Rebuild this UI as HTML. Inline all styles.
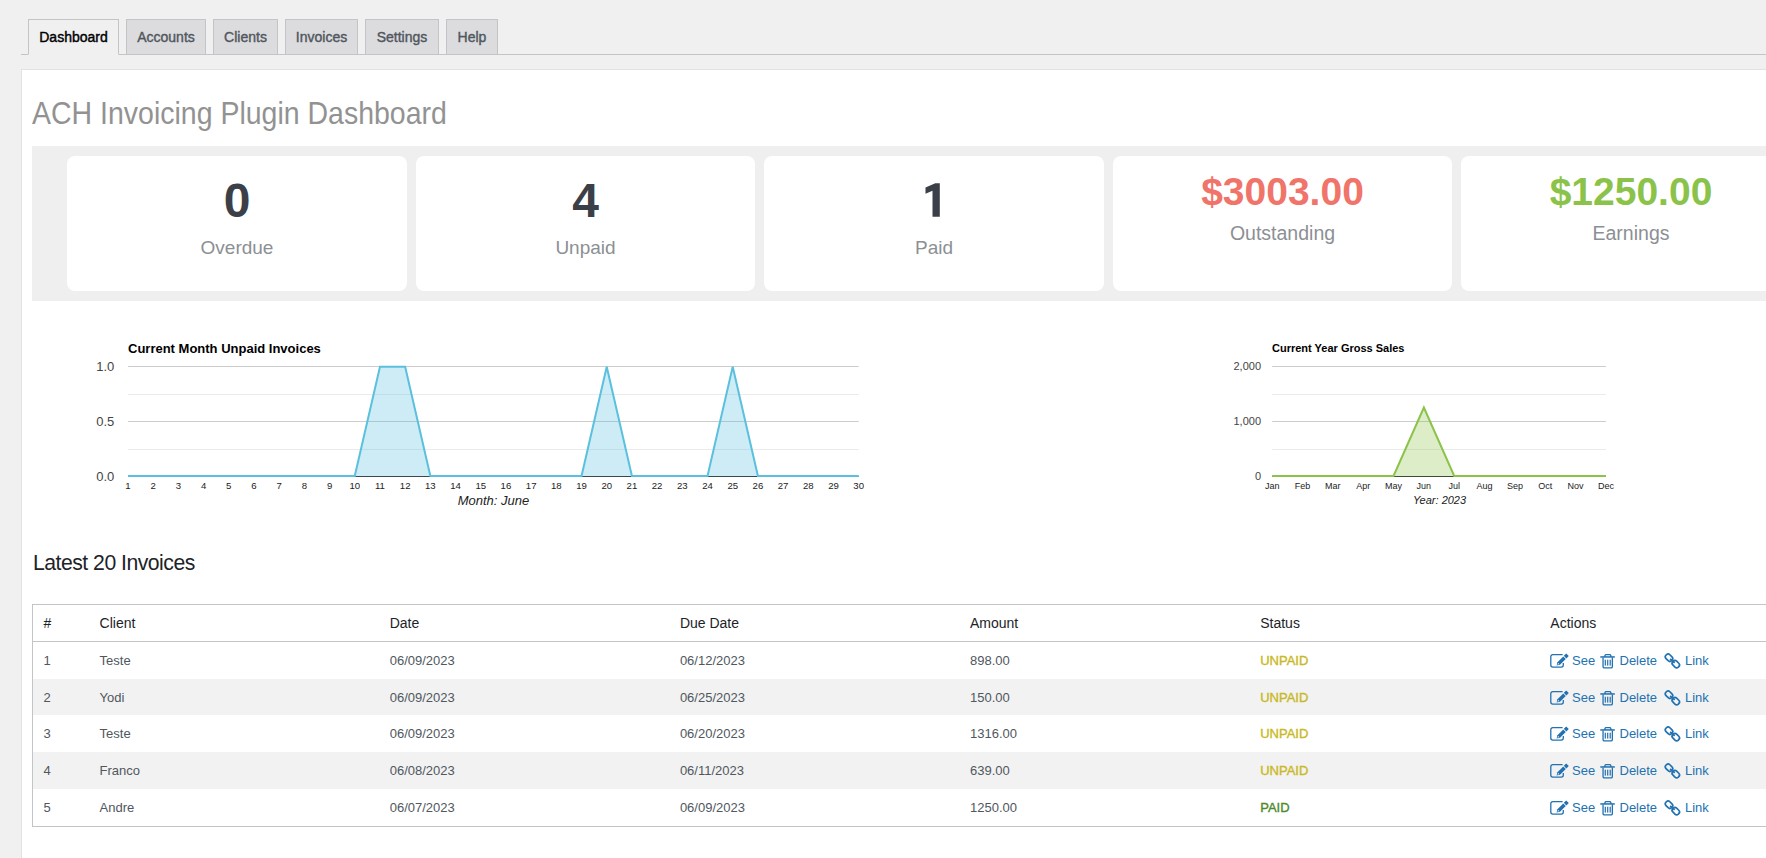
<!DOCTYPE html>
<html><head><meta charset="utf-8">
<style>
*{box-sizing:border-box;margin:0;padding:0}
html,body{width:1766px;height:858px;overflow:hidden;background:#f0f0f1;font-family:"Liberation Sans",sans-serif;position:relative}
.abs{position:absolute}
.navline{position:absolute;left:21px;top:54px;width:1745px;height:1px;background:#c3c4c7}
.tab{position:absolute;top:19px;height:36px;border:1px solid #c3c4c7;background:#dcdcde;color:#50575e;font-weight:normal;-webkit-text-stroke:0.4px currentColor;font-size:14px;line-height:34px;text-align:center;white-space:nowrap}
.tab.active{background:#f0f0f1;border-bottom-color:#f0f0f1;color:#000}
.panel{position:absolute;left:21px;top:69px;width:1800px;height:900px;background:#fff;border:1px solid #e2e2e2}
.title{position:absolute;left:32px;top:94.8px;font-size:30.5px;color:#929292;white-space:nowrap;line-height:36px;transform:scaleX(0.934);transform-origin:0 0}
.stats{position:absolute;left:32px;top:146px;width:1800px;height:155px;background:#efefef}
.card{position:absolute;top:156px;height:135px;background:#fff;border-radius:8px;text-align:center}
.num{position:absolute;left:0;right:0;font-weight:bold;color:#3b4048;white-space:nowrap}
.t{position:absolute;white-space:nowrap;line-height:1}
.ic{position:absolute}
.h2{position:absolute;left:33px;white-space:nowrap;color:#1d2327;line-height:1}
.lbl{position:absolute;left:0;right:0;color:#8c8f94;white-space:nowrap}
</style></head>
<body>
<div class="navline"></div>
<div class="tab active" style="left:28px;width:91px">Dashboard</div>
<div class="tab" style="left:126px;width:80px">Accounts</div>
<div class="tab" style="left:213px;width:65px">Clients</div>
<div class="tab" style="left:285px;width:73px">Invoices</div>
<div class="tab" style="left:365px;width:74px">Settings</div>
<div class="tab" style="left:446px;width:52px">Help</div>

<div class="panel"></div>
<div class="title">ACH Invoicing Plugin Dashboard</div>

<div class="stats"></div>
<div class="card" style="left:67px;width:340px"><div class="num" style="top:17px;font-size:48px;line-height:56px">0</div><div class="lbl" style="top:80px;font-size:19px;line-height:24px">Overdue</div></div>
<div class="card" style="left:416px;width:339px"><div class="num" style="top:17px;font-size:48px;line-height:56px">4</div><div class="lbl" style="top:80px;font-size:19px;line-height:24px">Unpaid</div></div>
<div class="card" style="left:764px;width:340px"><svg class="abs" style="left:0;top:0" width="340" height="80"><polygon points="171.3,27.2 175.8,27.2 175.8,60.7 168.5,60.7 168.5,34.7 161.5,37.7 161.5,31.5" fill="#3b4048"/></svg><div class="lbl" style="top:80px;font-size:19px;line-height:24px">Paid</div></div>
<div class="card" style="left:1113px;width:339px"><div class="num" style="top:14px;font-size:39px;line-height:44px;color:#f0746a">$3003.00</div><div class="lbl" style="top:64.6px;font-size:19.5px;line-height:24px">Outstanding</div></div>
<div class="card" style="left:1461px;width:340px"><div class="num" style="top:14px;font-size:39px;line-height:44px;color:#8bc34a">$1250.00</div><div class="lbl" style="top:64.6px;font-size:19.5px;line-height:24px">Earnings</div></div>

<svg class="abs" style="left:0;top:0" width="1766" height="560" font-family="Liberation Sans, sans-serif">
<text x="128" y="353" font-size="13" font-weight="bold" fill="#000">Current Month Unpaid Invoices</text>
<rect x="128" y="366" width="730.7" height="1" fill="#cccccc"/>
<rect x="128" y="394" width="730.7" height="1" fill="#ebebeb"/>
<rect x="128" y="421" width="730.7" height="1" fill="#cccccc"/>
<rect x="128" y="449" width="730.7" height="1" fill="#ebebeb"/>
<rect x="128" y="476" width="730.7" height="1" fill="#333333"/>
<path d="M128.00,476.50 L128.00,476.00 L153.20,476.00 L178.39,476.00 L203.59,476.00 L228.79,476.00 L253.98,476.00 L279.18,476.00 L304.38,476.00 L329.57,476.00 L354.77,476.00 L379.97,366.80 L405.16,366.80 L430.36,476.00 L455.56,476.00 L480.75,476.00 L505.95,476.00 L531.14,476.00 L556.34,476.00 L581.54,476.00 L606.73,366.80 L631.93,476.00 L657.13,476.00 L682.32,476.00 L707.52,476.00 L732.72,366.80 L757.91,476.00 L783.11,476.00 L808.31,476.00 L833.50,476.00 L858.70,476.00 L858.70,476.50 Z" fill="#5bc0de" fill-opacity="0.3" stroke="none"/>
<path d="M128.00,476.00 L153.20,476.00 L178.39,476.00 L203.59,476.00 L228.79,476.00 L253.98,476.00 L279.18,476.00 L304.38,476.00 L329.57,476.00 L354.77,476.00 L379.97,366.80 L405.16,366.80 L430.36,476.00 L455.56,476.00 L480.75,476.00 L505.95,476.00 L531.14,476.00 L556.34,476.00 L581.54,476.00 L606.73,366.80 L631.93,476.00 L657.13,476.00 L682.32,476.00 L707.52,476.00 L732.72,366.80 L757.91,476.00 L783.11,476.00 L808.31,476.00 L833.50,476.00 L858.70,476.00" fill="none" stroke="#5bc0de" stroke-width="2" stroke-linejoin="miter"/>
<text x="114.3" y="370.8" font-size="13" text-anchor="end" fill="#444444">1.0</text>
<text x="114.3" y="425.8" font-size="13" text-anchor="end" fill="#444444">0.5</text>
<text x="114.3" y="480.8" font-size="13" text-anchor="end" fill="#444444">0.0</text>
<text x="128.00" y="489" font-size="9.6" text-anchor="middle" fill="#222222">1</text>
<text x="153.20" y="489" font-size="9.6" text-anchor="middle" fill="#222222">2</text>
<text x="178.39" y="489" font-size="9.6" text-anchor="middle" fill="#222222">3</text>
<text x="203.59" y="489" font-size="9.6" text-anchor="middle" fill="#222222">4</text>
<text x="228.79" y="489" font-size="9.6" text-anchor="middle" fill="#222222">5</text>
<text x="253.98" y="489" font-size="9.6" text-anchor="middle" fill="#222222">6</text>
<text x="279.18" y="489" font-size="9.6" text-anchor="middle" fill="#222222">7</text>
<text x="304.38" y="489" font-size="9.6" text-anchor="middle" fill="#222222">8</text>
<text x="329.57" y="489" font-size="9.6" text-anchor="middle" fill="#222222">9</text>
<text x="354.77" y="489" font-size="9.6" text-anchor="middle" fill="#222222">10</text>
<text x="379.97" y="489" font-size="9.6" text-anchor="middle" fill="#222222">11</text>
<text x="405.16" y="489" font-size="9.6" text-anchor="middle" fill="#222222">12</text>
<text x="430.36" y="489" font-size="9.6" text-anchor="middle" fill="#222222">13</text>
<text x="455.56" y="489" font-size="9.6" text-anchor="middle" fill="#222222">14</text>
<text x="480.75" y="489" font-size="9.6" text-anchor="middle" fill="#222222">15</text>
<text x="505.95" y="489" font-size="9.6" text-anchor="middle" fill="#222222">16</text>
<text x="531.14" y="489" font-size="9.6" text-anchor="middle" fill="#222222">17</text>
<text x="556.34" y="489" font-size="9.6" text-anchor="middle" fill="#222222">18</text>
<text x="581.54" y="489" font-size="9.6" text-anchor="middle" fill="#222222">19</text>
<text x="606.73" y="489" font-size="9.6" text-anchor="middle" fill="#222222">20</text>
<text x="631.93" y="489" font-size="9.6" text-anchor="middle" fill="#222222">21</text>
<text x="657.13" y="489" font-size="9.6" text-anchor="middle" fill="#222222">22</text>
<text x="682.32" y="489" font-size="9.6" text-anchor="middle" fill="#222222">23</text>
<text x="707.52" y="489" font-size="9.6" text-anchor="middle" fill="#222222">24</text>
<text x="732.72" y="489" font-size="9.6" text-anchor="middle" fill="#222222">25</text>
<text x="757.91" y="489" font-size="9.6" text-anchor="middle" fill="#222222">26</text>
<text x="783.11" y="489" font-size="9.6" text-anchor="middle" fill="#222222">27</text>
<text x="808.31" y="489" font-size="9.6" text-anchor="middle" fill="#222222">28</text>
<text x="833.50" y="489" font-size="9.6" text-anchor="middle" fill="#222222">29</text>
<text x="858.70" y="489" font-size="9.6" text-anchor="middle" fill="#222222">30</text>
<text x="493.4" y="505" font-size="13" font-style="italic" text-anchor="middle" fill="#222222">Month: June</text>
<text x="1272" y="352" font-size="11" font-weight="bold" fill="#000">Current Year Gross Sales</text>
<rect x="1272.2" y="366" width="333.7" height="1" fill="#cccccc"/>
<rect x="1272.2" y="394" width="333.7" height="1" fill="#ebebeb"/>
<rect x="1272.2" y="421" width="333.7" height="1" fill="#cccccc"/>
<rect x="1272.2" y="449" width="333.7" height="1" fill="#ebebeb"/>
<rect x="1272.2" y="476" width="333.7" height="1" fill="#333333"/>
<path d="M1272.20,476.50 L1272.20,476.00 L1302.54,476.00 L1332.87,476.00 L1363.21,476.00 L1393.55,476.00 L1423.88,407.56 L1454.22,476.00 L1484.55,476.00 L1514.89,476.00 L1545.23,476.00 L1575.56,476.00 L1605.90,476.00 L1605.90,476.50 Z" fill="#8bc34a" fill-opacity="0.3" stroke="none"/>
<path d="M1272.20,476.00 L1302.54,476.00 L1332.87,476.00 L1363.21,476.00 L1393.55,476.00 L1423.88,407.56 L1454.22,476.00 L1484.55,476.00 L1514.89,476.00 L1545.23,476.00 L1575.56,476.00 L1605.90,476.00" fill="none" stroke="#8bc34a" stroke-width="2"/>
<text x="1261" y="370" font-size="11" text-anchor="end" fill="#444444">2,000</text>
<text x="1261" y="425" font-size="11" text-anchor="end" fill="#444444">1,000</text>
<text x="1261" y="480" font-size="11" text-anchor="end" fill="#444444">0</text>
<text x="1272.20" y="489" font-size="9" text-anchor="middle" fill="#222222">Jan</text>
<text x="1302.54" y="489" font-size="9" text-anchor="middle" fill="#222222">Feb</text>
<text x="1332.87" y="489" font-size="9" text-anchor="middle" fill="#222222">Mar</text>
<text x="1363.21" y="489" font-size="9" text-anchor="middle" fill="#222222">Apr</text>
<text x="1393.55" y="489" font-size="9" text-anchor="middle" fill="#222222">May</text>
<text x="1423.88" y="489" font-size="9" text-anchor="middle" fill="#222222">Jun</text>
<text x="1454.22" y="489" font-size="9" text-anchor="middle" fill="#222222">Jul</text>
<text x="1484.55" y="489" font-size="9" text-anchor="middle" fill="#222222">Aug</text>
<text x="1514.89" y="489" font-size="9" text-anchor="middle" fill="#222222">Sep</text>
<text x="1545.23" y="489" font-size="9" text-anchor="middle" fill="#222222">Oct</text>
<text x="1575.56" y="489" font-size="9" text-anchor="middle" fill="#222222">Nov</text>
<text x="1605.90" y="489" font-size="9" text-anchor="middle" fill="#222222">Dec</text>
<text x="1439.5" y="504" font-size="11" font-style="italic" text-anchor="middle" fill="#222222">Year: 2023</text>
</svg>
<div class="h2" style="top:551.9px;font-size:21.2px;letter-spacing:-0.5px">Latest 20 Invoices</div>
<div class="abs" style="left:32px;top:604px;width:1800px;height:223px;border:1px solid #c3c4c7;background:#fff"></div>
<div class="abs" style="left:33px;top:641px;width:1800px;height:1px;background:#c3c4c7"></div>
<div class="abs" style="left:33px;top:679px;width:1800px;height:36px;background:#f2f2f2"></div>
<div class="abs" style="left:33px;top:752px;width:1800px;height:37px;background:#f2f2f2"></div>
<div class="t" style="left:43.6px;top:616.15px;font-size:14px;color:#1d2327;font-weight:normal;">#</div>
<div class="t" style="left:99.6px;top:616.15px;font-size:14px;color:#1d2327;font-weight:normal;">Client</div>
<div class="t" style="left:389.7px;top:616.15px;font-size:14px;color:#1d2327;font-weight:normal;">Date</div>
<div class="t" style="left:679.9px;top:616.15px;font-size:14px;color:#1d2327;font-weight:normal;">Due Date</div>
<div class="t" style="left:970.0px;top:616.15px;font-size:14px;color:#1d2327;font-weight:normal;">Amount</div>
<div class="t" style="left:1260.2px;top:616.15px;font-size:14px;color:#1d2327;font-weight:normal;">Status</div>
<div class="t" style="left:1550.3px;top:616.15px;font-size:14px;color:#1d2327;font-weight:normal;">Actions</div>
<div class="t" style="left:43.6px;top:654.00px;font-size:13px;color:#50575e;font-weight:normal;">1</div>
<div class="t" style="left:99.6px;top:654.00px;font-size:13px;color:#50575e;font-weight:normal;">Teste</div>
<div class="t" style="left:389.7px;top:654.00px;font-size:13px;color:#50575e;font-weight:normal;">06/09/2023</div>
<div class="t" style="left:679.9px;top:654.00px;font-size:13px;color:#50575e;font-weight:normal;">06/12/2023</div>
<div class="t" style="left:970.0px;top:654.00px;font-size:13px;color:#50575e;font-weight:normal;">898.00</div>
<div class="t" style="left:1260.2px;top:654.00px;font-size:13px;color:#c9b824;font-weight:normal;-webkit-text-stroke:0.35px currentColor;">UNPAID</div>
<svg class="ic" style="left:1548.5px;top:652.7px" width="20" height="17" viewBox="0 0 20 17"><path d="M13.6,1.7 H3.8 A2,2 0 0 0 1.8,3.7 V12.1 A2,2 0 0 0 3.8,14.1 H12.3 A2,2 0 0 0 14.3,12.1 V10" fill="none" stroke="#2271b1" stroke-width="1.3"/><g transform="translate(7.6,12.6) rotate(-45)"><path d="M0,0 L3,-1.8 H11.2 V1.8 H3 Z" fill="#2271b1"/><rect x="12" y="-1.8" width="3.4" height="3.6" fill="#2271b1"/><path d="M1.2,0 L3,-0.8 V0.8 Z" fill="#fff"/></g></svg>
<div class="t" style="left:1572px;top:654.00px;font-size:13px;color:#2271b1;font-weight:normal;">See</div>
<svg class="ic" style="left:1599px;top:653px" width="18" height="17" viewBox="0 0 18 17"><rect x="1.3" y="3.2" width="14.5" height="1.5" fill="#2271b1"/><path d="M5.9,3.9 V2.6 A1.3,1.3 0 0 1 7.2,1.7 H10.6 A1.3,1.3 0 0 1 11.9,2.6 V3.9" fill="none" stroke="#2271b1" stroke-width="1.3"/><path d="M4.05,4.4 V13.6 A1.3,1.3 0 0 0 5.35,14.85 H12.05 A1.3,1.3 0 0 0 13.35,13.6 V4.4" fill="none" stroke="#2271b1" stroke-width="1.3"/><rect x="5.7" y="6.7" width="1.2" height="5.9" fill="#2271b1"/><rect x="8.1" y="6.7" width="1.2" height="5.9" fill="#2271b1"/><rect x="10.6" y="6.7" width="1.2" height="5.9" fill="#2271b1"/></svg>
<div class="t" style="left:1619.5px;top:654.00px;font-size:13px;color:#2271b1;font-weight:normal;">Delete</div>
<svg class="ic" style="left:1663px;top:652px" width="19" height="18" viewBox="0 0 19 18"><g fill="none" stroke="#2271b1" stroke-width="1.7"><g transform="translate(6.0,5.7) rotate(45)"><rect x="-3.9" y="-2.7" width="7.8" height="5.4" rx="2.4"/><path d="M4.6,0 H1.6"/></g><g transform="translate(12.8,12.1) rotate(45)"><rect x="-3.9" y="-2.7" width="7.8" height="5.4" rx="2.4"/><path d="M-4.6,0 H-1.6"/></g></g></svg>
<div class="t" style="left:1685px;top:654.00px;font-size:13px;color:#2271b1;font-weight:normal;">Link</div>
<div class="t" style="left:43.6px;top:691.00px;font-size:13px;color:#50575e;font-weight:normal;">2</div>
<div class="t" style="left:99.6px;top:691.00px;font-size:13px;color:#50575e;font-weight:normal;">Yodi</div>
<div class="t" style="left:389.7px;top:691.00px;font-size:13px;color:#50575e;font-weight:normal;">06/09/2023</div>
<div class="t" style="left:679.9px;top:691.00px;font-size:13px;color:#50575e;font-weight:normal;">06/25/2023</div>
<div class="t" style="left:970.0px;top:691.00px;font-size:13px;color:#50575e;font-weight:normal;">150.00</div>
<div class="t" style="left:1260.2px;top:691.00px;font-size:13px;color:#c9b824;font-weight:normal;-webkit-text-stroke:0.35px currentColor;">UNPAID</div>
<svg class="ic" style="left:1548.5px;top:689.7px" width="20" height="17" viewBox="0 0 20 17"><path d="M13.6,1.7 H3.8 A2,2 0 0 0 1.8,3.7 V12.1 A2,2 0 0 0 3.8,14.1 H12.3 A2,2 0 0 0 14.3,12.1 V10" fill="none" stroke="#2271b1" stroke-width="1.3"/><g transform="translate(7.6,12.6) rotate(-45)"><path d="M0,0 L3,-1.8 H11.2 V1.8 H3 Z" fill="#2271b1"/><rect x="12" y="-1.8" width="3.4" height="3.6" fill="#2271b1"/><path d="M1.2,0 L3,-0.8 V0.8 Z" fill="#fff"/></g></svg>
<div class="t" style="left:1572px;top:691.00px;font-size:13px;color:#2271b1;font-weight:normal;">See</div>
<svg class="ic" style="left:1599px;top:690px" width="18" height="17" viewBox="0 0 18 17"><rect x="1.3" y="3.2" width="14.5" height="1.5" fill="#2271b1"/><path d="M5.9,3.9 V2.6 A1.3,1.3 0 0 1 7.2,1.7 H10.6 A1.3,1.3 0 0 1 11.9,2.6 V3.9" fill="none" stroke="#2271b1" stroke-width="1.3"/><path d="M4.05,4.4 V13.6 A1.3,1.3 0 0 0 5.35,14.85 H12.05 A1.3,1.3 0 0 0 13.35,13.6 V4.4" fill="none" stroke="#2271b1" stroke-width="1.3"/><rect x="5.7" y="6.7" width="1.2" height="5.9" fill="#2271b1"/><rect x="8.1" y="6.7" width="1.2" height="5.9" fill="#2271b1"/><rect x="10.6" y="6.7" width="1.2" height="5.9" fill="#2271b1"/></svg>
<div class="t" style="left:1619.5px;top:691.00px;font-size:13px;color:#2271b1;font-weight:normal;">Delete</div>
<svg class="ic" style="left:1663px;top:689px" width="19" height="18" viewBox="0 0 19 18"><g fill="none" stroke="#2271b1" stroke-width="1.7"><g transform="translate(6.0,5.7) rotate(45)"><rect x="-3.9" y="-2.7" width="7.8" height="5.4" rx="2.4"/><path d="M4.6,0 H1.6"/></g><g transform="translate(12.8,12.1) rotate(45)"><rect x="-3.9" y="-2.7" width="7.8" height="5.4" rx="2.4"/><path d="M-4.6,0 H-1.6"/></g></g></svg>
<div class="t" style="left:1685px;top:691.00px;font-size:13px;color:#2271b1;font-weight:normal;">Link</div>
<div class="t" style="left:43.6px;top:727.00px;font-size:13px;color:#50575e;font-weight:normal;">3</div>
<div class="t" style="left:99.6px;top:727.00px;font-size:13px;color:#50575e;font-weight:normal;">Teste</div>
<div class="t" style="left:389.7px;top:727.00px;font-size:13px;color:#50575e;font-weight:normal;">06/09/2023</div>
<div class="t" style="left:679.9px;top:727.00px;font-size:13px;color:#50575e;font-weight:normal;">06/20/2023</div>
<div class="t" style="left:970.0px;top:727.00px;font-size:13px;color:#50575e;font-weight:normal;">1316.00</div>
<div class="t" style="left:1260.2px;top:727.00px;font-size:13px;color:#c9b824;font-weight:normal;-webkit-text-stroke:0.35px currentColor;">UNPAID</div>
<svg class="ic" style="left:1548.5px;top:725.7px" width="20" height="17" viewBox="0 0 20 17"><path d="M13.6,1.7 H3.8 A2,2 0 0 0 1.8,3.7 V12.1 A2,2 0 0 0 3.8,14.1 H12.3 A2,2 0 0 0 14.3,12.1 V10" fill="none" stroke="#2271b1" stroke-width="1.3"/><g transform="translate(7.6,12.6) rotate(-45)"><path d="M0,0 L3,-1.8 H11.2 V1.8 H3 Z" fill="#2271b1"/><rect x="12" y="-1.8" width="3.4" height="3.6" fill="#2271b1"/><path d="M1.2,0 L3,-0.8 V0.8 Z" fill="#fff"/></g></svg>
<div class="t" style="left:1572px;top:727.00px;font-size:13px;color:#2271b1;font-weight:normal;">See</div>
<svg class="ic" style="left:1599px;top:726px" width="18" height="17" viewBox="0 0 18 17"><rect x="1.3" y="3.2" width="14.5" height="1.5" fill="#2271b1"/><path d="M5.9,3.9 V2.6 A1.3,1.3 0 0 1 7.2,1.7 H10.6 A1.3,1.3 0 0 1 11.9,2.6 V3.9" fill="none" stroke="#2271b1" stroke-width="1.3"/><path d="M4.05,4.4 V13.6 A1.3,1.3 0 0 0 5.35,14.85 H12.05 A1.3,1.3 0 0 0 13.35,13.6 V4.4" fill="none" stroke="#2271b1" stroke-width="1.3"/><rect x="5.7" y="6.7" width="1.2" height="5.9" fill="#2271b1"/><rect x="8.1" y="6.7" width="1.2" height="5.9" fill="#2271b1"/><rect x="10.6" y="6.7" width="1.2" height="5.9" fill="#2271b1"/></svg>
<div class="t" style="left:1619.5px;top:727.00px;font-size:13px;color:#2271b1;font-weight:normal;">Delete</div>
<svg class="ic" style="left:1663px;top:725px" width="19" height="18" viewBox="0 0 19 18"><g fill="none" stroke="#2271b1" stroke-width="1.7"><g transform="translate(6.0,5.7) rotate(45)"><rect x="-3.9" y="-2.7" width="7.8" height="5.4" rx="2.4"/><path d="M4.6,0 H1.6"/></g><g transform="translate(12.8,12.1) rotate(45)"><rect x="-3.9" y="-2.7" width="7.8" height="5.4" rx="2.4"/><path d="M-4.6,0 H-1.6"/></g></g></svg>
<div class="t" style="left:1685px;top:727.00px;font-size:13px;color:#2271b1;font-weight:normal;">Link</div>
<div class="t" style="left:43.6px;top:764.00px;font-size:13px;color:#50575e;font-weight:normal;">4</div>
<div class="t" style="left:99.6px;top:764.00px;font-size:13px;color:#50575e;font-weight:normal;">Franco</div>
<div class="t" style="left:389.7px;top:764.00px;font-size:13px;color:#50575e;font-weight:normal;">06/08/2023</div>
<div class="t" style="left:679.9px;top:764.00px;font-size:13px;color:#50575e;font-weight:normal;">06/11/2023</div>
<div class="t" style="left:970.0px;top:764.00px;font-size:13px;color:#50575e;font-weight:normal;">639.00</div>
<div class="t" style="left:1260.2px;top:764.00px;font-size:13px;color:#c9b824;font-weight:normal;-webkit-text-stroke:0.35px currentColor;">UNPAID</div>
<svg class="ic" style="left:1548.5px;top:762.7px" width="20" height="17" viewBox="0 0 20 17"><path d="M13.6,1.7 H3.8 A2,2 0 0 0 1.8,3.7 V12.1 A2,2 0 0 0 3.8,14.1 H12.3 A2,2 0 0 0 14.3,12.1 V10" fill="none" stroke="#2271b1" stroke-width="1.3"/><g transform="translate(7.6,12.6) rotate(-45)"><path d="M0,0 L3,-1.8 H11.2 V1.8 H3 Z" fill="#2271b1"/><rect x="12" y="-1.8" width="3.4" height="3.6" fill="#2271b1"/><path d="M1.2,0 L3,-0.8 V0.8 Z" fill="#fff"/></g></svg>
<div class="t" style="left:1572px;top:764.00px;font-size:13px;color:#2271b1;font-weight:normal;">See</div>
<svg class="ic" style="left:1599px;top:763px" width="18" height="17" viewBox="0 0 18 17"><rect x="1.3" y="3.2" width="14.5" height="1.5" fill="#2271b1"/><path d="M5.9,3.9 V2.6 A1.3,1.3 0 0 1 7.2,1.7 H10.6 A1.3,1.3 0 0 1 11.9,2.6 V3.9" fill="none" stroke="#2271b1" stroke-width="1.3"/><path d="M4.05,4.4 V13.6 A1.3,1.3 0 0 0 5.35,14.85 H12.05 A1.3,1.3 0 0 0 13.35,13.6 V4.4" fill="none" stroke="#2271b1" stroke-width="1.3"/><rect x="5.7" y="6.7" width="1.2" height="5.9" fill="#2271b1"/><rect x="8.1" y="6.7" width="1.2" height="5.9" fill="#2271b1"/><rect x="10.6" y="6.7" width="1.2" height="5.9" fill="#2271b1"/></svg>
<div class="t" style="left:1619.5px;top:764.00px;font-size:13px;color:#2271b1;font-weight:normal;">Delete</div>
<svg class="ic" style="left:1663px;top:762px" width="19" height="18" viewBox="0 0 19 18"><g fill="none" stroke="#2271b1" stroke-width="1.7"><g transform="translate(6.0,5.7) rotate(45)"><rect x="-3.9" y="-2.7" width="7.8" height="5.4" rx="2.4"/><path d="M4.6,0 H1.6"/></g><g transform="translate(12.8,12.1) rotate(45)"><rect x="-3.9" y="-2.7" width="7.8" height="5.4" rx="2.4"/><path d="M-4.6,0 H-1.6"/></g></g></svg>
<div class="t" style="left:1685px;top:764.00px;font-size:13px;color:#2271b1;font-weight:normal;">Link</div>
<div class="t" style="left:43.6px;top:801.00px;font-size:13px;color:#50575e;font-weight:normal;">5</div>
<div class="t" style="left:99.6px;top:801.00px;font-size:13px;color:#50575e;font-weight:normal;">Andre</div>
<div class="t" style="left:389.7px;top:801.00px;font-size:13px;color:#50575e;font-weight:normal;">06/07/2023</div>
<div class="t" style="left:679.9px;top:801.00px;font-size:13px;color:#50575e;font-weight:normal;">06/09/2023</div>
<div class="t" style="left:970.0px;top:801.00px;font-size:13px;color:#50575e;font-weight:normal;">1250.00</div>
<div class="t" style="left:1260.2px;top:801.00px;font-size:13px;color:#4d8a2a;font-weight:normal;-webkit-text-stroke:0.35px currentColor;">PAID</div>
<svg class="ic" style="left:1548.5px;top:799.7px" width="20" height="17" viewBox="0 0 20 17"><path d="M13.6,1.7 H3.8 A2,2 0 0 0 1.8,3.7 V12.1 A2,2 0 0 0 3.8,14.1 H12.3 A2,2 0 0 0 14.3,12.1 V10" fill="none" stroke="#2271b1" stroke-width="1.3"/><g transform="translate(7.6,12.6) rotate(-45)"><path d="M0,0 L3,-1.8 H11.2 V1.8 H3 Z" fill="#2271b1"/><rect x="12" y="-1.8" width="3.4" height="3.6" fill="#2271b1"/><path d="M1.2,0 L3,-0.8 V0.8 Z" fill="#fff"/></g></svg>
<div class="t" style="left:1572px;top:801.00px;font-size:13px;color:#2271b1;font-weight:normal;">See</div>
<svg class="ic" style="left:1599px;top:800px" width="18" height="17" viewBox="0 0 18 17"><rect x="1.3" y="3.2" width="14.5" height="1.5" fill="#2271b1"/><path d="M5.9,3.9 V2.6 A1.3,1.3 0 0 1 7.2,1.7 H10.6 A1.3,1.3 0 0 1 11.9,2.6 V3.9" fill="none" stroke="#2271b1" stroke-width="1.3"/><path d="M4.05,4.4 V13.6 A1.3,1.3 0 0 0 5.35,14.85 H12.05 A1.3,1.3 0 0 0 13.35,13.6 V4.4" fill="none" stroke="#2271b1" stroke-width="1.3"/><rect x="5.7" y="6.7" width="1.2" height="5.9" fill="#2271b1"/><rect x="8.1" y="6.7" width="1.2" height="5.9" fill="#2271b1"/><rect x="10.6" y="6.7" width="1.2" height="5.9" fill="#2271b1"/></svg>
<div class="t" style="left:1619.5px;top:801.00px;font-size:13px;color:#2271b1;font-weight:normal;">Delete</div>
<svg class="ic" style="left:1663px;top:799px" width="19" height="18" viewBox="0 0 19 18"><g fill="none" stroke="#2271b1" stroke-width="1.7"><g transform="translate(6.0,5.7) rotate(45)"><rect x="-3.9" y="-2.7" width="7.8" height="5.4" rx="2.4"/><path d="M4.6,0 H1.6"/></g><g transform="translate(12.8,12.1) rotate(45)"><rect x="-3.9" y="-2.7" width="7.8" height="5.4" rx="2.4"/><path d="M-4.6,0 H-1.6"/></g></g></svg>
<div class="t" style="left:1685px;top:801.00px;font-size:13px;color:#2271b1;font-weight:normal;">Link</div>
</body></html>
